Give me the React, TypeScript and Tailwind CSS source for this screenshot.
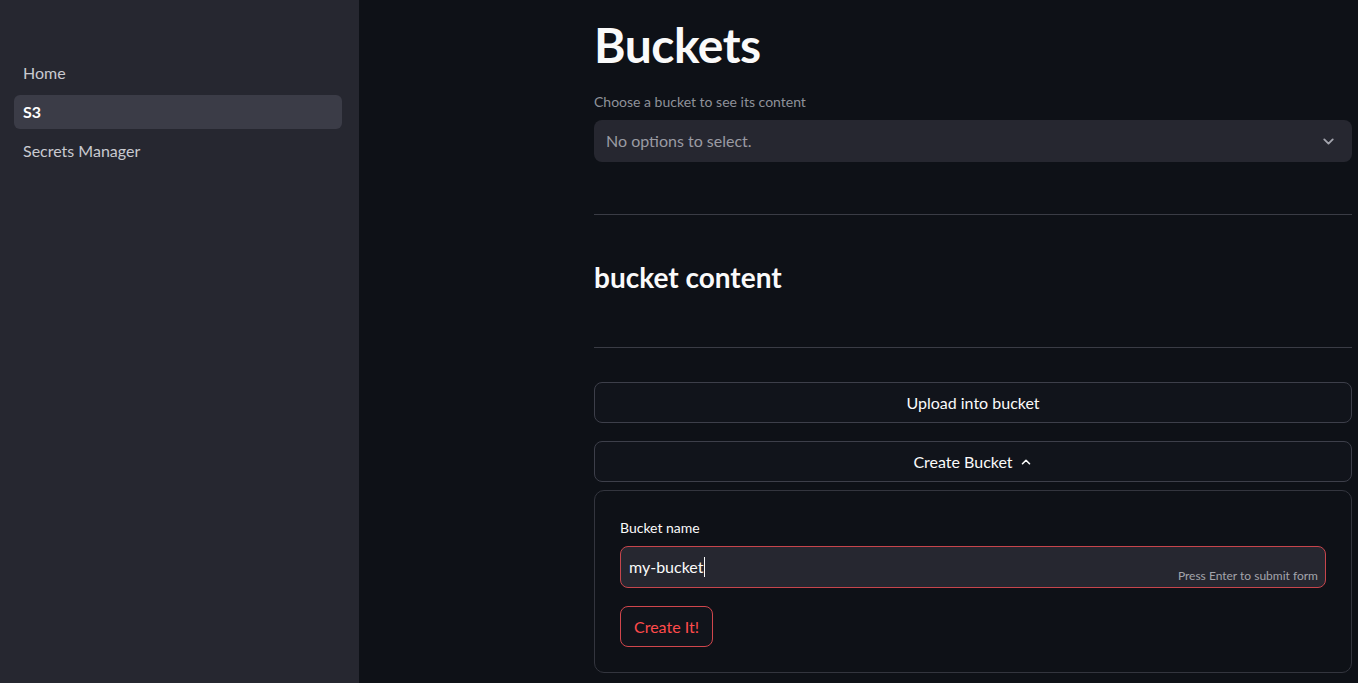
import React from "react";

export default function App() {
  return (
    <div
      className="flex h-[683px] w-[1358px] overflow-hidden bg-[#0e1117] text-[#fafafa]"
      style={{ fontFamily: "Lato, 'Noto Sans', sans-serif" }}
    >
      <aside className="flex h-full w-[359px] shrink-0 flex-col gap-[5px] bg-[#262730] pl-[14px] pr-[17px] pt-[56px]">
        <div className="flex h-[34px] items-center rounded-[6px] px-[9px] text-[16px] text-[#c9cad0]">Home</div>
        <div className="flex h-[34px] items-center rounded-[6px] bg-[#3b3c47] px-[9px] text-[16px] font-bold text-white">S3</div>
        <div className="flex h-[34px] items-center rounded-[6px] px-[9px] text-[16px] text-[#c9cad0]">Secrets Manager</div>
      </aside>
      <main className="ml-[235px] flex w-[758px] flex-col">
        <h1 className="mt-[16px] text-[48px] font-bold leading-[58px] tracking-[-0.5px]">Buckets</h1>
        <label className="mt-[18px] text-[14px] leading-[20px] text-[#8f919a]">Choose a bucket to see its content</label>
        <div className="mt-[8px] flex h-[42px] items-center justify-between rounded-[8px] bg-[#262730] pl-[12px] pr-[15px]">
          <span className="text-[16px] text-[#9a9ba3]">No options to select.</span>
          <svg width="17" height="17" viewBox="0 0 24 24" fill="none" stroke="#a3a4ad" strokeWidth="2.6" strokeLinecap="round" strokeLinejoin="round">
            <path d="M6 9l6 6 6-6" />
          </svg>
        </div>
        <div className="mt-[52px] h-px bg-[#3a3c45]" />
        <h3 className="mt-[44px] text-[28px] font-bold leading-[36px]">bucket content</h3>
        <div className="mt-[52px] h-px bg-[#3a3c45]" />
        <button className="mt-[34px] flex h-[41px] items-center justify-center rounded-[8px] border border-[#3d3f4a] bg-[#11141b] text-[16px] text-[#fafafa]">
          Upload into bucket
        </button>
        <button className="mt-[18px] flex h-[41px] items-center justify-center gap-[6px] rounded-[8px] border border-[#3d3f4a] bg-[#11141b] text-[16px] text-[#fafafa]">
          Create Bucket
          <svg width="14" height="14" viewBox="0 0 24 24" fill="none" stroke="#fafafa" strokeWidth="2.8" strokeLinecap="round" strokeLinejoin="round">
            <path d="M6 15l6-6 6 6" />
          </svg>
        </button>
        <div className="mt-[8px] flex h-[183px] flex-col rounded-[10px] border border-[#33353e] px-[25px] pt-[27px]">
          <label className="text-[14px] leading-[20px] text-[#fafafa]">Bucket name</label>
          <div className="relative mt-[8px] flex h-[42px] items-center rounded-[8px] border border-[#c6454c] bg-[#262730] px-[8px]">
            <span className="text-[16px] text-[#fafafa]">my-bucket</span>
            <span className="ml-[1px] h-[20px] w-px bg-[#fafafa]" />
            <span className="absolute bottom-[2px] right-[7px] text-[12px] text-[#a3a4ab]">Press Enter to submit form</span>
          </div>
          <button className="mt-[18px] flex h-[41px] w-[93px] items-center justify-center rounded-[8px] border border-[#d0464c] bg-[#11141b] text-[16px] text-[#ff4b4b]">
            Create It!
          </button>
        </div>
      </main>
    </div>
  );
}
